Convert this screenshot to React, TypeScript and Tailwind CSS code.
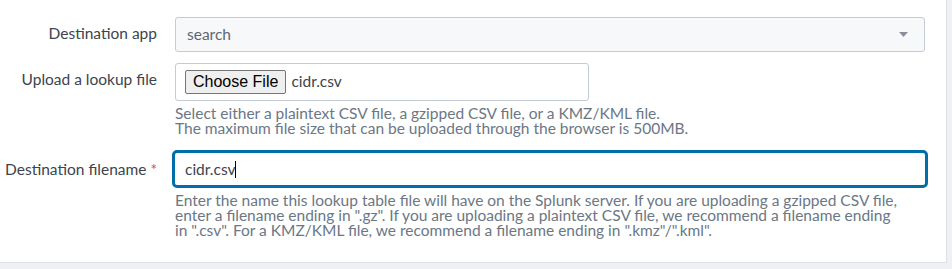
import React from "react";

const font = { fontFamily: "Lato, 'Noto Sans', sans-serif" };

export default function App() {
  return (
    <div className="w-[952px] h-[269px] bg-[#eef0f3] overflow-hidden" style={font}>
      <div className="w-[947px] h-[263px] bg-white border-r border-b border-[#dde1e6] pt-[17px]">
        {/* Row 1 */}
        <div className="flex items-start">
          <div className="w-[157px] text-right text-[15.5px] text-[#3c444d] pt-[6px] leading-[20px]">Destination app</div>
          <div className="ml-[18px] w-[750px] h-[35px] rounded-[3px] border border-[#c3cbd4] bg-[#f7f8fa] flex items-center justify-between px-[11px]">
            <span className="text-[15.5px] text-[#5c6773]">search</span>
            <svg width="9" height="5" viewBox="0 0 9 5" className="mr-[5px]">
              <path d="M0 0 H9 L4.5 5 Z" fill="#8a9099" />
            </svg>
          </div>
        </div>
        {/* Row 2 */}
        <div className="flex items-start mt-[11px]">
          <div className="w-[157px] text-right text-[15.5px] text-[#3c444d] pt-[6px] leading-[20px]">Upload a lookup file</div>
          <div className="ml-[18px] w-[414px]">
            <div className="h-[38px] rounded-[3px] border border-[#c3cbd4] bg-white flex items-center pl-[9px]">
              <div
                className="h-[24px] px-[7px] border border-[#767676] rounded-[2px] bg-[#efefef] text-[16px] text-black leading-[22px]"
                style={{ fontFamily: "'Liberation Sans', Arial, sans-serif" }}
              >
                Choose File
              </div>
              <span className="ml-[5px] text-[15.5px] text-[#3c444d]">cidr.csv</span>
            </div>
            <div className="mt-[5px] text-[15.5px] leading-[14.7px] text-[#6b7785] whitespace-nowrap">
              Select either a plaintext CSV file, a gzipped CSV file, or a KMZ/KML file.
              <br />
              The maximum file size that can be uploaded through the browser is 500MB.
            </div>
          </div>
        </div>
        {/* Row 3 */}
        <div className="flex items-start mt-[15px]">
          <div className="w-[157px] text-right text-[15.5px] text-[#3c444d] pt-[9px] leading-[20px]">
            Destination filename <span className="text-[#dc4e41]">*</span>
          </div>
          <div className="ml-[15px] w-[756px]">
            <div className="h-[38px] rounded-[5px] border-[3px] border-[#006eaa] bg-white flex items-center pl-[10px]">
              <span className="text-[15.5px] text-[#3c444d]">cidr.csv</span>
              <span className="w-px h-[17px] bg-black" />
            </div>
            <div className="mt-[5px] ml-[3px] text-[15.5px] leading-[14.7px] text-[#6b7785] whitespace-nowrap">
              Enter the name this lookup table file will have on the Splunk server. If you are uploading a gzipped CSV file,
              <br />
              enter a filename ending in ".gz". If you are uploading a plaintext CSV file, we recommend a filename ending
              <br />
              in ".csv". For a KMZ/KML file, we recommend a filename ending in ".kmz"/".kml".
            </div>
          </div>
        </div>
      </div>
    </div>
  );
}
